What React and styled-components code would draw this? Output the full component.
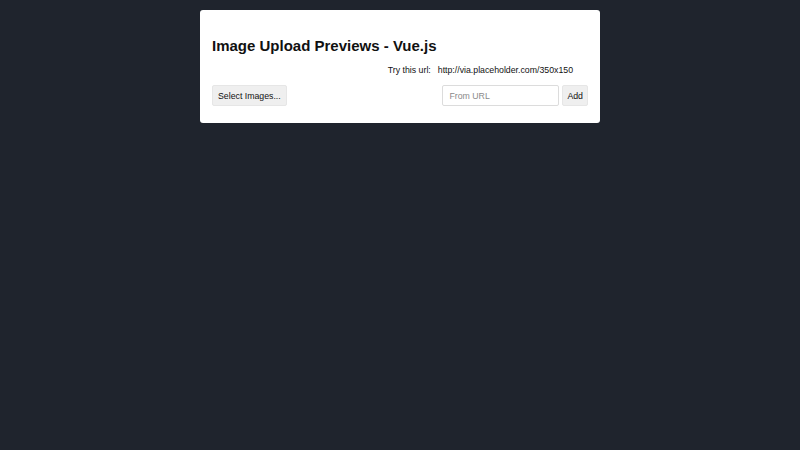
import React, { useState } from 'react';
import styled, { createGlobalStyle } from 'styled-components';

const GlobalStyle = createGlobalStyle`
  html, body {
    margin: 0;
    padding: 0;
    background: #1f242d;
    font-family: "Liberation Sans", Arial, sans-serif;
  }
`;

const App = () => {
  const [url, setUrl] = useState('');

  return (
    <React.Fragment>
      <GlobalStyle />
      <Page>
        <Card>
          <Title>Image Upload Previews - Vue.js</Title>
          <HintRow>
            <HintLabel>Try this url:</HintLabel>
            <HintUrl>http://via.placeholder.com/350x150</HintUrl>
          </HintRow>
          <ControlsRow>
            <Button type="button">Select Images...</Button>
            <UrlForm onSubmit={(e) => e.preventDefault()}>
              <UrlInput
                placeholder="From URL"
                value={url}
                onChange={(e) => setUrl(e.target.value)}
              />
              <Button type="submit" $compact>
                Add
              </Button>
            </UrlForm>
          </ControlsRow>
        </Card>
      </Page>
    </React.Fragment>
  );
};

export default App;

const Page = styled.main`
  display: flex;
  justify-content: center;
  align-items: flex-start;
  padding-top: 10px;
  min-height: 450px;
  box-sizing: border-box;
`;

const Card = styled.section`
  width: 400px;
  box-sizing: border-box;
  background: #ffffff;
  border-radius: 3px;
  padding: 27px 12px 17px 12px;
`;

const Title = styled.h2`
  margin: 0 0 9px 0;
  font-size: 15px;
  line-height: 18px;
  font-weight: 700;
  color: #111;
`;

const HintRow = styled.div`
  display: flex;
  justify-content: flex-end;
  gap: 7px;
  padding-right: 15px;
  font-size: 8.75px;
  line-height: 12px;
  color: #111;
`;

const HintLabel = styled.span``;

const HintUrl = styled.span``;

const ControlsRow = styled.div`
  display: flex;
  justify-content: space-between;
  align-items: center;
  margin-top: 9px;
`;

const UrlForm = styled.form`
  display: flex;
  gap: 3px;
  margin: 0;
`;

const Button = styled.button`
  height: 21px;
  padding: ${({ $compact }) => ($compact ? '0 4px' : '0 5px')};
  font-family: inherit;
  font-size: 8.75px;
  color: #111;
  background: #efefef;
  border: 1px solid #e6e6e6;
  border-radius: 2px;
  cursor: pointer;
`;

const UrlInput = styled.input`
  width: 117px;
  height: 21px;
  box-sizing: border-box;
  padding: 0 6px;
  font-family: inherit;
  font-size: 8.75px;
  border: 1px solid #dcdcdc;
  border-radius: 2px;
  outline: none;

  &::placeholder {
    color: #8a8a8a;
  }
`;
